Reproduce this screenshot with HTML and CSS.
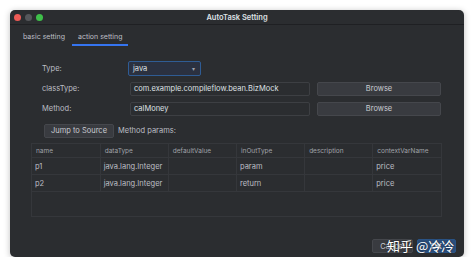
FILE: index.html
```html
<!DOCTYPE html>
<html lang="en">
<head>
    <meta charset="UTF-8">
    <title>AutoTask Setting</title>
    <link rel="stylesheet" href="styles.css">
</head>
<body>

<div class="window">
    <div class="titlebar">
        <div class="lights">
            <span class="light red"></span>
            <span class="light grey"></span>
            <span class="light green"></span>
        </div>
        <span class="title">AutoTask Setting</span>
    </div>

    <div class="tabs">
        <span class="tab">basic setting</span>
        <span class="tab active">action setting</span>
    </div>

    <div class="form">
        <div class="row">
            <span class="label">Type:</span>
            <div class="combo">java<span class="arrow">&#9662;</span></div>
        </div>
        <div class="row">
            <span class="label">classType:</span>
            <div class="field">com.example.compileflow.bean.BizMock</div>
            <button class="btn browse">Browse</button>
        </div>
        <div class="row">
            <span class="label">Method:</span>
            <div class="field">calMoney</div>
            <button class="btn browse">Browse</button>
        </div>
        <div class="row jump-row">
            <button class="btn jump">Jump to Source</button>
            <span class="params">Method params:</span>
        </div>
    </div>

    <div class="table-pane">
        <table class="params-table">
            <thead>
                <tr>
                    <th>name</th>
                    <th>dataType</th>
                    <th>defaultValue</th>
                    <th>inOutType</th>
                    <th>description</th>
                    <th>contextVarName</th>
                </tr>
            </thead>
            <tbody>
                <tr>
                    <td>p1</td>
                    <td>java.lang.Integer</td>
                    <td></td>
                    <td>param</td>
                    <td></td>
                    <td>price</td>
                </tr>
                <tr>
                    <td>p2</td>
                    <td>java.lang.Integer</td>
                    <td></td>
                    <td>return</td>
                    <td></td>
                    <td>price</td>
                </tr>
            </tbody>
        </table>
    </div>

    <div class="footer">
        <button class="btn cancel">Cancel</button>
        <button class="btn ok">OK</button>
    </div>

    <!-- marca d'água por cima dos botões -->
    <div class="watermark">知乎 <span>@冷冷</span></div>
</div>

</body>
</html>
```

FILE: styles.css
```css
body {
    margin: 0;
    background-color: #ffffff;
    font-family: Inter, "Noto Sans", sans-serif;
}
.window {
    position: relative;
    margin: 10px 0 0 10px;
    width: 454px;
    height: 247px;
    background-color: #2b2d30;
    border-radius: 5px;
    box-shadow: 0 1px 6px rgba(0, 0, 0, 0.25);
    color: #bcbec4;
    font-size: 7.5px;
    overflow: hidden;
}
.titlebar {
    position: relative;
    display: flex;
    align-items: center;
    height: 15px;
    border-bottom: 1px solid #1f2023;
    box-sizing: border-box;
}
.lights {
    display: flex;
    gap: 4px;
    margin-left: 4px;
}
.light {
    width: 7px;
    height: 7px;
    border-radius: 50%;
}
.light.red { background-color: #ee5b56; }
.light.grey { background-color: #55575b; }
.light.green { background-color: #3fc04a; }
.title {
    position: absolute;
    left: 0;
    right: 0;
    text-align: center;
    font-weight: 600;
    font-size: 7.5px;
    color: #dfe1e5;
}
.tabs {
    display: flex;
    gap: 1px;
    padding: 3px 0 0 7px;
}
.tab {
    padding: 0 6px;
    height: 18px;
    line-height: 18px;
    font-size: 7px;
    color: #bcbec4;
    box-sizing: border-box;
}
.tab.active {
    border-bottom: 2px solid #3574f0;
}
.form {
    display: flex;
    flex-direction: column;
    gap: 5px;
    padding: 15px 0 0 32px;
}
.row {
    display: flex;
    align-items: center;
    height: 15px;
}
.label {
    width: 86px;
    color: #bcbec4;
}
.combo {
    position: relative;
    width: 73px;
    height: 15px;
    line-height: 13px;
    padding-left: 4px;
    border: 1px solid #2f5c94;
    border-radius: 2px;
    background-color: #2b3140;
    box-sizing: border-box;
    color: #dfe1e5;
}
.combo .arrow {
    position: absolute;
    right: 5px;
    top: 0;
    font-size: 6px;
    color: #9da0a8;
}
.field {
    margin-left: 2px;
    width: 180px;
    height: 14px;
    line-height: 12px;
    padding-left: 3px;
    border: 1px solid #3d3f43;
    border-radius: 2px;
    box-sizing: border-box;
    color: #dfe1e5;
}
.btn {
    height: 14px;
    padding: 0;
    border: 1px solid #45474c;
    border-radius: 2px;
    background-color: #393b40;
    color: #c9ccd2;
    font-family: Inter, "Noto Sans", sans-serif;
    font-size: 7.5px;
    box-sizing: border-box;
}
.browse {
    margin-left: 7px;
    width: 124px;
}
.jump-row {
    margin-top: 2px;
    margin-left: 2px;
}
.jump {
    width: 70px;
    height: 14px;
}
.params {
    margin-left: 4px;
}
.table-pane {
    margin: 5px 0 0 21px;
    width: 411px;
    height: 74px;
    border: 1px solid #35373b;
    box-sizing: border-box;
}
.params-table {
    width: 100%;
    border-collapse: collapse;
    table-layout: fixed;
}
.params-table th {
    height: 13px;
    padding: 0 4px;
    font-weight: normal;
    font-size: 6.5px;
    text-align: left;
    color: #a0a3a9;
    border-right: 1px solid #35373b;
    border-bottom: 1px solid #35373b;
}
.params-table td {
    height: 16px;
    padding: 0 3px;
    color: #bcbec4;
    border-right: 1px solid #35373b;
    border-bottom: 1px solid #35373b;
}
.params-table th:last-child,
.params-table td:last-child {
    border-right: none;
}
.footer {
    display: flex;
    gap: 4px;
    margin: 22px 0 0 362px;
}
.cancel {
    width: 41px;
}
.ok {
    width: 39px;
    border-color: #2a5385;
    background-color: #2a4e7c;
    color: #ffffff;
}
.watermark {
    position: absolute;
    left: 377px;
    top: 226px;
    font-family: "Noto Sans CJK SC", sans-serif;
    font-size: 13px;
    color: #ffffff;
    text-shadow: 0 0 2px rgba(0, 0, 0, 0.6);
    white-space: nowrap;
}
```
